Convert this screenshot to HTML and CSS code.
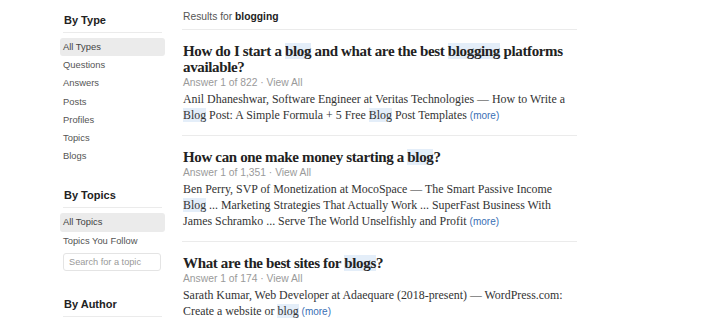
FILE: index.html
```html
<!DOCTYPE html>
<html>
<head>
<meta charset="utf-8">
<link rel="stylesheet" href="styles.css">
</head>
<body>
<div class="page">
  <aside class="sidebar">
    <div class="section">
      <h3 class="sec-title">By Type</h3>
      <ul class="opts">
        <li class="opt active">All Types</li>
        <li class="opt">Questions</li>
        <li class="opt">Answers</li>
        <li class="opt">Posts</li>
        <li class="opt">Profiles</li>
        <li class="opt">Topics</li>
        <li class="opt">Blogs</li>
      </ul>
    </div>
    <div class="section">
      <h3 class="sec-title">By Topics</h3>
      <ul class="opts">
        <li class="opt active">All Topics</li>
        <li class="opt">Topics You Follow</li>
      </ul>
      <div class="search">Search for a topic</div>
    </div>
    <div class="section last">
      <h3 class="sec-title">By Author</h3>
    </div>
  </aside>
  <main class="main">
    <div class="results-head">Results for <b>blogging</b></div>
    <div class="result">
      <div class="q">How do I start a <span class="hl">blog</span> and what are the best <span class="hl">blogging</span> platforms available?</div>
      <div class="meta">Answer 1 of 822 · View All</div>
      <div class="snippet">Anil Dhaneshwar, Software Engineer at Veritas Technologies — How to Write a <span class="hl">Blog</span> Post: A Simple Formula + 5 Free <span class="hl">Blog</span> Post Templates <span class="more">(more)</span></div>
    </div>
    <div class="result">
      <div class="q">How can one make money starting a <span class="hl">blog</span>?</div>
      <div class="meta">Answer 1 of 1,351 · View All</div>
      <div class="snippet">Ben Perry, SVP of Monetization at MocoSpace — The Smart Passive Income <span class="hl">Blog</span> ... Marketing Strategies That Actually Work ... SuperFast Business With James Schramko ... Serve The World Unselfishly and Profit <span class="more">(more)</span></div>
    </div>
    <div class="result last">
      <div class="q">What are the best sites for <span class="hl">blogs</span>?</div>
      <div class="meta">Answer 1 of 174 · View All</div>
      <div class="snippet">Sarath Kumar, Web Developer at Adaequare (2018-present) — WordPress.com: Create a website or <span class="hl">blog</span> <span class="more">(more)</span></div>
    </div>
  </main>
</div>
</body>
</html>
```
FILE: styles.css
```css
* { box-sizing: border-box; }
html, body { margin: 0; padding: 0; background: #fff; }
body { font-family: "Liberation Sans", Arial, sans-serif; color: #333; overflow: hidden; height: 321px; }
.page { display: flex; align-items: flex-start; gap: 17px; padding-left: 60px; padding-top: 9px; }
.sidebar { width: 105px; flex: none; }
.section { margin-bottom: 22px; }
.section:nth-child(2) { margin-bottom: 25px; }
.section.last { margin-bottom: 0; }
.sec-title { margin: 3px 3px 0 3px; font-size: 11px; font-weight: bold; color: #222; line-height: 16px; padding: 0 0 4px 1px; border-bottom: 1px solid #ebebeb; }
.opts { list-style: none; margin: 5px 0 0 0; padding: 0; }
.opt { font-size: 9.4px; line-height: 18.2px; padding-left: 3px; color: #555; border-radius: 3px; }
.opt.active { background: #ebebeb; color: #444; }
.search { margin: 3.5px 4px 0 3px; height: 18px; border: 1px solid #e4e4e4; border-radius: 3px; font-size: 9.2px; color: #999; line-height: 16px; padding-left: 5px; }
.main { width: 395px; flex: none; }
.results-head { font-size: 10.3px; line-height: 16px; color: #555; padding-bottom: 4px; border-bottom: 1px solid #ebebeb; padding-left: 1px; }
.results-head b { color: #222; }
.result { padding: 13px 0 11px 1px; border-bottom: 1px solid #ebebeb; }
.result.last { padding-bottom: 0; border-bottom: none; }
.q { font-family: "Liberation Serif", "Times New Roman", serif; font-weight: bold; font-size: 15px; letter-spacing: -0.35px; line-height: 16px; color: #222; }
.meta { font-size: 10.3px; line-height: 16px; color: #9a9a9a; }
.snippet { font-family: "Liberation Serif", "Times New Roman", serif; font-size: 11.9px; line-height: 16px; color: #333; }
.hl { background: #e4eef9; }
.more { font-family: "Liberation Sans", Arial, sans-serif; font-size: 10px; color: #3a6fb5; }
```
